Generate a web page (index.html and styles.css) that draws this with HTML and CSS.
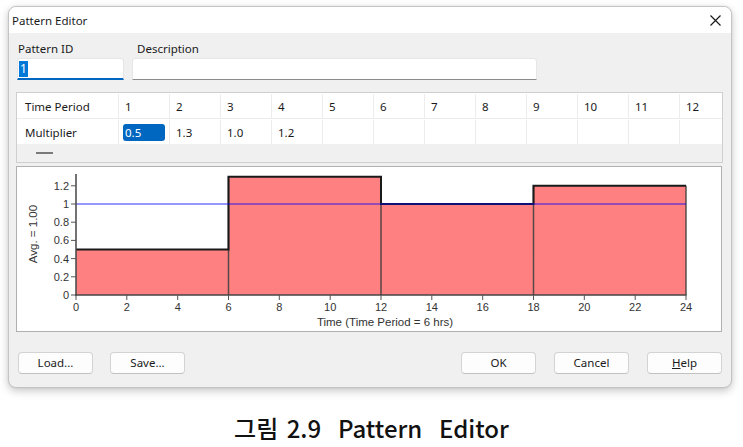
FILE: index.html
```html
<!DOCTYPE html>
<html>
<head>
<meta charset="utf-8">
<link rel="stylesheet" href="styles.css">
</head>
<body>
<div class="page">
  <div class="dialog">
    <div class="titlebar">
      <span class="title">Pattern Editor</span>
      <svg class="close" width="11" height="11" viewBox="0 0 11 11"><path d="M0.5 0.5 L10.5 10.5 M10.5 0.5 L0.5 10.5" stroke="#1a1a1a" stroke-width="1.2" fill="none"/></svg>
    </div>
    <div class="content">
      <div class="fields">
        <div class="field field-id">
          <div class="label">Pattern ID</div>
          <div class="input focused"><span class="sel">1</span></div>
        </div>
        <div class="field field-desc">
          <div class="label">Description</div>
          <div class="input"></div>
        </div>
      </div>

      <div class="grid">
        <div class="row">
          <div class="cell first">Time Period</div>
          <div class="cell">1</div><div class="cell">2</div><div class="cell">3</div><div class="cell">4</div>
          <div class="cell">5</div><div class="cell">6</div><div class="cell">7</div><div class="cell">8</div>
          <div class="cell">9</div><div class="cell">10</div><div class="cell">11</div><div class="cell">12</div>
        </div>
        <div class="row row2">
          <div class="cell first">Multiplier</div>
          <div class="cell"><span class="cellsel">0.5</span></div><div class="cell">1.3</div><div class="cell">1.0</div><div class="cell">1.2</div>
          <div class="cell"></div><div class="cell"></div><div class="cell"></div><div class="cell"></div>
          <div class="cell"></div><div class="cell"></div><div class="cell"></div><div class="cell"></div>
        </div>
        <div class="hscroll"><span class="thumb"></span></div>
      </div>

      <div class="chart">
        <svg width="704" height="164" viewBox="0 0 704 164">
          <g class="bars">
            <rect x="59" y="82.5" width="152.5" height="45.5" fill="#ff8080"/>
            <rect x="211.5" y="9.7" width="152.5" height="118.3" fill="#ff8080"/>
            <rect x="364" y="37" width="152.5" height="91" fill="#ff8080"/>
            <rect x="516.5" y="18.8" width="152.5" height="109.2" fill="#ff8080"/>
          </g>
          <g stroke="#3a3a3a" stroke-width="1.5" fill="none" stroke-opacity="0.85">
            <line x1="211.5" y1="9.7" x2="211.5" y2="128"/>
            <line x1="364" y1="9.7" x2="364" y2="128"/>
            <line x1="516.5" y1="18.8" x2="516.5" y2="128"/>
            <line x1="669" y1="18.8" x2="669" y2="128"/>
          </g>
          <path d="M59 82.5 H211.5 V9.7 H364 V37 H516.5 V18.8 H669" stroke="#1a1a1a" stroke-width="2" fill="none"/>
          <line x1="59" y1="37" x2="669" y2="37" stroke="#0000ff" stroke-opacity="0.55" stroke-width="1.6"/>
          <g stroke="#444" stroke-width="1.5" fill="none">
            <line x1="59" y1="7" x2="59" y2="128.5"/>
            <line x1="58" y1="128" x2="669.5" y2="128"/>
          </g>
          <g stroke="#555" stroke-width="1" fill="none">
            <line x1="54" y1="128" x2="59" y2="128"/>
            <line x1="54" y1="109.8" x2="59" y2="109.8"/>
            <line x1="54" y1="91.6" x2="59" y2="91.6"/>
            <line x1="54" y1="73.4" x2="59" y2="73.4"/>
            <line x1="54" y1="55.2" x2="59" y2="55.2"/>
            <line x1="54" y1="37" x2="59" y2="37"/>
            <line x1="54" y1="18.8" x2="59" y2="18.8"/>
            <line x1="59" y1="128" x2="59" y2="133"/>
            <line x1="109.8" y1="128" x2="109.8" y2="133"/>
            <line x1="160.7" y1="128" x2="160.7" y2="133"/>
            <line x1="211.5" y1="128" x2="211.5" y2="133"/>
            <line x1="262.3" y1="128" x2="262.3" y2="133"/>
            <line x1="313.2" y1="128" x2="313.2" y2="133"/>
            <line x1="364" y1="128" x2="364" y2="133"/>
            <line x1="414.8" y1="128" x2="414.8" y2="133"/>
            <line x1="465.7" y1="128" x2="465.7" y2="133"/>
            <line x1="516.5" y1="128" x2="516.5" y2="133"/>
            <line x1="567.3" y1="128" x2="567.3" y2="133"/>
            <line x1="618.2" y1="128" x2="618.2" y2="133"/>
            <line x1="669" y1="128" x2="669" y2="133"/>
          </g>
          <g class="ylab" text-anchor="end">
            <text x="52" y="132">0</text>
            <text x="52" y="113.8">0.2</text>
            <text x="52" y="95.6">0.4</text>
            <text x="52" y="77.4">0.6</text>
            <text x="52" y="59.2">0.8</text>
            <text x="52" y="41">1</text>
            <text x="52" y="22.8">1.2</text>
          </g>
          <g class="xlab" text-anchor="middle">
            <text x="59" y="144">0</text>
            <text x="109.8" y="144">2</text>
            <text x="160.7" y="144">4</text>
            <text x="211.5" y="144">6</text>
            <text x="262.3" y="144">8</text>
            <text x="313.2" y="144">10</text>
            <text x="364" y="144">12</text>
            <text x="414.8" y="144">14</text>
            <text x="465.7" y="144">16</text>
            <text x="516.5" y="144">18</text>
            <text x="567.3" y="144">20</text>
            <text x="618.2" y="144">22</text>
            <text x="669" y="144">24</text>
          </g>
          <text class="axtitle" transform="translate(20,67) rotate(-90)" text-anchor="middle">Avg. = 1.00</text>
          <text class="axtitle" x="368" y="159" text-anchor="middle">Time (Time Period = 6 hrs)</text>
        </svg>
      </div>

      <div class="buttons">
        <div class="btngroup">
          <div class="btn">Load...</div>
          <div class="btn">Save...</div>
        </div>
        <div class="btngroup right">
          <div class="btn">OK</div>
          <div class="btn">Cancel</div>
          <div class="btn"><u>H</u>elp</div>
        </div>
      </div>
    </div>
  </div>
  <div class="caption">그림 2.9&nbsp; Pattern&nbsp; Editor</div>
</div>
</body>
</html>
```
FILE: styles.css
```css
* { box-sizing: border-box; }
html, body { margin: 0; padding: 0; background: #ffffff; }
body { width: 743px; height: 447px; overflow: hidden; font-family: "Noto Sans", "Open Sans", sans-serif; font-size: 11.5px; color: #1a1a1a; }

.page { padding: 6px 0 0 8px; }

.dialog {
  width: 724px;
  height: 382px;
  border: 1px solid #c4c4c4;
  border-radius: 8px;
  overflow: hidden;
  background: #f0f0f0;
  box-shadow: 0 3px 8px rgba(0,0,0,0.22), 0 0 2px rgba(0,0,0,0.08);
  display: flex;
  flex-direction: column;
}

.titlebar {
  height: 26px;
  background: #ffffff;
  display: flex;
  align-items: center;
  justify-content: space-between;
  padding: 0 10px 0 3px;
  flex-shrink: 0;
}
.title { font-size: 11.5px; line-height: 16px; padding-top: 1px; }
.close { display: block; margin-top: 1px; }

.content { padding: 0 8px 0 7px; }

.fields { display: flex; gap: 8px; padding-left: 1px; margin-top: 8px; }
.field { display: flex; flex-direction: column; }
.field-id { width: 107px; }
.field-desc { width: 405px; }
.label { line-height: 16px; height: 17px; padding-left: 1px; }
.field-desc .label { padding-left: 5px; }
.input {
  height: 22px;
  background: #ffffff;
  border: 1px solid #e6e6e6;
  border-bottom: 1px solid #8a8a8a;
  border-radius: 3px 3px 0 0;
  padding: 2px 0 0 1px;
}
.input.focused { border-bottom: 2px solid #0067c0; }
.sel {
  display: inline-block;
  background: #0078d7;
  color: #ffffff;
  line-height: 16px;
  padding: 0 1px;
  font-size: 12px;
}

.grid {
  margin-top: 12px;
  width: 707px;
  border: 1px solid #cfcfcf;
  background: #ffffff;
  overflow: hidden;
}
.row {
  display: grid;
  grid-template-columns: 102px repeat(12, 51px);
  height: 26px;
  border-bottom: 1px solid #ececec;
  padding-top: 1px;
}
.row2 { height: 25px; border-bottom: none; padding-top: 1px; }
.cell {
  border-right: 1px solid #ececec;
  padding-left: 6px;
  display: flex;
  align-items: center;
  white-space: nowrap;
}
.cell.first { padding-left: 8px; }
.cellsel {
  display: inline-block;
  background: #0067c0;
  color: #ffffff;
  border-radius: 3px;
  width: 42px;
  height: 17px;
  line-height: 17px;
  padding-left: 2px;
  margin-left: -2px;
}
.hscroll {
  height: 18px;
  background: #f0f0f0;
  display: flex;
  align-items: center;
  padding-left: 19px;
}
.thumb { display: block; width: 17px; height: 2px; background: #7a7a7a; }

.chart {
  margin-top: 3px;
  width: 706px;
  height: 166px;
  border: 1px solid #b0b0b0;
  background: #ffffff;
}
.chart svg { display: block; }
.chart text { font-family: "Liberation Sans", Arial, sans-serif; fill: #333333; }
.ylab text, .xlab text { font-size: 11px; }
.axtitle { font-size: 11.5px; }

.buttons {
  margin-top: 20px;
  display: flex;
  justify-content: space-between;
  padding-left: 2px;
  padding-right: 1px;
}
.btngroup { display: flex; gap: 17px; }
.btngroup.right { gap: 18px; }
.btn {
  width: 75px;
  height: 22px;
  background: #fdfdfd;
  border: 1px solid #d3d3d3;
  border-bottom-color: #c2c2c2;
  border-radius: 4px;
  display: flex;
  align-items: center;
  justify-content: center;
  line-height: 16px;
}

.caption {
  margin-top: 24px;
  margin-left: -8px;
  text-align: center;
  font-family: "Noto Sans CJK KR", "Noto Sans", sans-serif;
  font-weight: 500;
  font-size: 24px;
  word-spacing: 3px;
  line-height: 32px;
  color: #111111;
}
```
